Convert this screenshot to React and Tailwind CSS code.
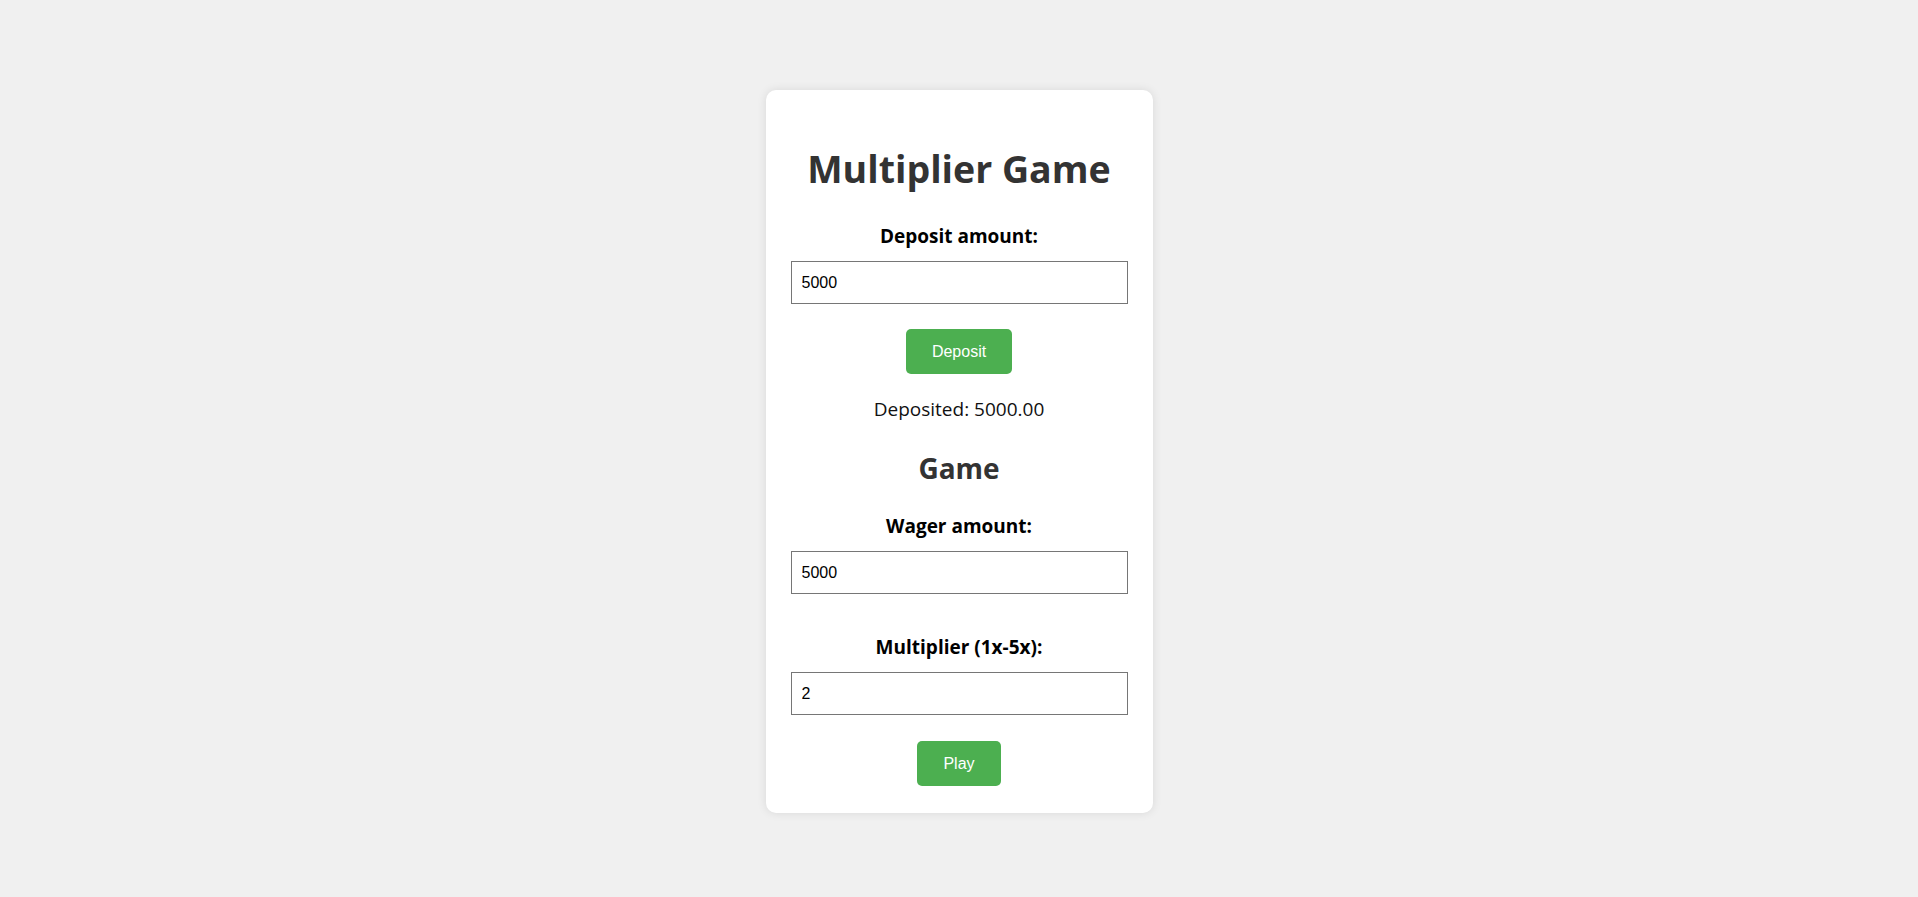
import { useState } from 'react';

const sans = "font-['Open_Sans','Noto_Sans',sans-serif]";
const arial = "font-['Liberation_Sans',Arial,sans-serif]";

const Field = ({ label, value, onChange, labelClass }) => (
  <>
    <label className={`block text-center text-[19px] leading-[24px] font-bold text-black ${labelClass}`}>{label}</label>
    <input
      type="text"
      value={value}
      onChange={(e) => onChange(e.target.value)}
      className={`mt-[13px] block w-full h-[43px] border border-[#767676] bg-white pl-[10px] text-[16px] text-black outline-none ${arial}`}
    />
  </>
);

const GreenButton = ({ children, className = '', onClick }) => (
  <div className={`flex justify-center ${className}`}>
    <button
      onClick={onClick}
      className={`h-[45px] px-[26px] rounded-[5px] bg-[#4caf50] text-white text-[16px] cursor-pointer ${arial}`}
    >
      {children}
    </button>
  </div>
);

export default function App() {
  const [deposit, setDeposit] = useState('5000');
  const [deposited, setDeposited] = useState(5000);
  const [wager, setWager] = useState('5000');
  const [multiplier, setMultiplier] = useState('2');

  return (
    <div className={`min-h-[897px] bg-[#f0f0f0] pt-[90px] ${sans}`}>
      <div className="mx-auto w-[387px] rounded-[10px] bg-white px-[25px] pt-[55px] pb-[27px] shadow-[0_0_10px_rgba(0,0,0,0.1)]">
        <h1 className="text-center text-[37.5px] leading-[48px] font-bold text-[#333]">Multiplier Game</h1>

        <Field label="Deposit amount:" value={deposit} onChange={setDeposit} labelClass="mt-[31px]" />
        <GreenButton className="mt-[25px]" onClick={() => setDeposited(parseFloat(deposit) || 0)}>
          Deposit
        </GreenButton>
        <p className="mt-[23px] text-center text-[19px] leading-[24px] text-[#111]">
          Deposited: {deposited.toFixed(2)}
        </p>

        <h2 className="mt-[29px] text-center text-[28px] leading-[36px] font-bold text-[#333]">Game</h2>

        <Field label="Wager amount:" value={wager} onChange={setWager} labelClass="mt-[28px]" />
        <Field label="Multiplier (1x-5x):" value={multiplier} onChange={setMultiplier} labelClass="mt-[41px]" />
        <GreenButton className="mt-[26px]">Play</GreenButton>
      </div>
    </div>
  );
}
